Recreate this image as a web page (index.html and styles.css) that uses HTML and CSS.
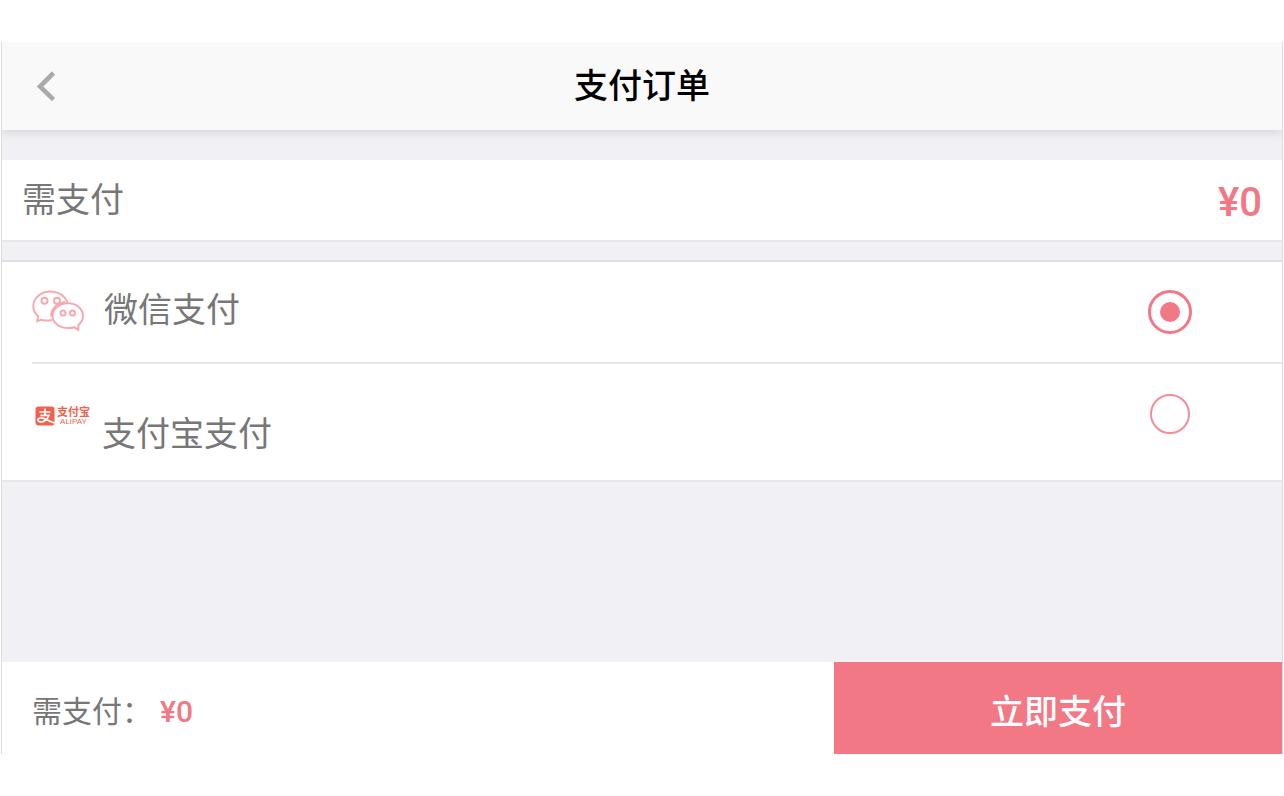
FILE: index.html
```html
<!DOCTYPE html>
<html lang="zh-CN">
<head>
<meta charset="utf-8">
<meta name="viewport" content="width=device-width, initial-scale=1">
<title>支付订单</title>
<link rel="stylesheet" href="styles.css">
</head>
<body>
<form class="page">
  <header class="topbar">
    <button class="back" type="button" aria-label="返回">
      <svg width="20" height="32" viewBox="0 0 20 32" fill="none" stroke="#aaa" stroke-width="4.6"><path d="M17.500 3 4 16.500l13.500 13.200"/></svg>
    </button>
    <h1 class="title">支付订单</h1>
  </header>
  <main class="content">
    <section class="amount">
      <span class="amount-label">需支付</span>
      <strong class="amount-value">¥0</strong>
    </section>
    <section class="methods">
      <label class="method wechat">
        <svg class="logo" width="56" height="44" viewBox="1.500 1.500 56 44" fill="none" stroke="#f7a8b0" stroke-width="2">
          <path d="M22 31.500c-4.500 1-8 .8-11.700-.3L6.800 32.700l.7-5.200C4.600 25 2.800 21.500 2.800 17.800 2.800 9.300 10.500 3 20 3c8.500 0 15.500 5 17 12"/>
          <path d="M37.500 14.800C29 14.800 22 20.300 22 27.200S29 39.600 37.500 39.600c2.500 0 4.600-.2 6.500-.8l3.800 2.600.2-5.200c3-2.200 4.500-5.400 4.500-9 0-6.900-6.500-12.400-15-12.400Z"/>
          <path d="M20.500 28c.2-7.500 5.500-13 14-14.500"/>
          <circle cx="14" cy="12.300" r="3"/><circle cx="26.500" cy="12.300" r="3"/>
          <circle cx="32.500" cy="24.500" r="2.500"/><circle cx="42" cy="24.500" r="2.500"/>
        </svg>
        <span class="name">微信支付</span>
        <input class="radio" type="radio" name="method" value="wechat" checked>
      </label>
      <label class="method alipay">
        <span class="logo alipay-logo">
          <svg width="20" height="20" viewBox="0 0 20 20"><rect width="19" height="19" x=".5" y=".5" rx="3" fill="#f0624c"/><g fill="none" stroke="#fff" stroke-width="1.700"><path d="M4.500 6h11M10 2.500V9M5.500 9.300h8.500c-.8 2.500-2.500 4.500-4.500 5.700-2 1.300-6 1.300-6.500-.8-.4-2.400 3.500-2.900 6-1.700 3 1.400 6 3.300 10.500 4.300"/></g></svg>
          <span class="brand"><span class="brand-cn">支付宝</span><span class="brand-en">ALIPAY</span></span>
        </span>
        <span class="name">支付宝支付</span>
        <input class="radio" type="radio" name="method" value="alipay">
      </label>
    </section>
  </main>
  <footer class="paybar">
    <p class="total">需支付：<strong class="total-value">¥0</strong></p>
    <button class="pay" type="submit">立即支付</button>
  </footer>
</form>
</body>
</html>
```
FILE: styles.css
```css
* { box-sizing: border-box; }
body {
  margin: 0;
  padding: 42px 1px;
  background: #fff;
  color: #777;
  font-family: "Liberation Sans", "Noto Sans CJK SC", sans-serif;
}
button { border: 0; padding: 0; font: inherit; cursor: pointer; }
svg { display: block; }
.page {
  display: flex;
  flex-direction: column;
  min-height: calc(100vh - 84px);
  border: solid #dcdcde;
  border-width: 0 1px;
}
.topbar {
  display: grid;
  grid-template-columns: 88px 1fr 88px;
  align-items: center;
  height: 88px;
  background: #f9f9f9;
  box-shadow: 0 2px 10px rgba(0, 0, 0, .13);
  clip-path: inset(0 0 -20px);
  z-index: 1;
}
.back { display: grid; place-items: center; height: 88px; background: none; }
.title { margin: 0; text-align: center; font-size: 34px; line-height: 48px; font-weight: 500; color: #000; }
.content { flex: 1; padding-top: 30px; background: #f0f0f5; }
.amount {
  display: flex;
  align-items: center;
  justify-content: space-between;
  height: 82px;
  padding: 0 20px;
  background: #fff;
  border-bottom: 2px solid #e7e7e9;
}
.amount-label { font-size: 34px; line-height: 48px; }
.amount-value { padding-top: 6px; font: 500 40px/48px Roboto, sans-serif; color: #f27885; }
.methods {
  margin-top: 18px;
  background: #fff;
  border: solid #e0e0e3;
  border-width: 2px 0;
  border-bottom-color: #e7e7e9;
}
.method {
  display: grid;
  grid-template-columns: 72px 1fr 44px;
  align-items: center;
  margin-left: 30px;
  padding-right: 90px;
}
.wechat { height: 102px; border-bottom: 2px solid #e5e5e6; }
.alipay { grid-template-columns: 70px 1fr 44px; height: 116px; padding-bottom: 16px; }
.name { font-size: 34px; line-height: 48px; }
.wechat .name { padding-bottom: 4px; }
.alipay .name { padding-top: 40px; }
.alipay-logo { display: flex; align-items: center; gap: 2px; padding: 4px 0 0 3px; }
.brand { display: flex; flex-direction: column; color: #f0624c; }
.brand-cn { font-size: 11px; line-height: 12px; font-weight: 700; }
.brand-en { font-size: 8px; line-height: 8px; text-align: center; }
.radio {
  appearance: none;
  display: grid;
  place-items: center;
  justify-self: center;
  width: 40px;
  height: 40px;
  margin: 0;
  border: 2px solid #f38e98;
  border-radius: 50%;
}
.radio:checked { width: 44px; height: 44px; border: 3px solid #f27885; }
.radio:checked::before { content: ""; width: 20px; height: 20px; border-radius: 50%; background: #f27885; }
.paybar { display: grid; grid-template-columns: 65% 35%; height: 92px; background: #fff; }
.total { display: flex; align-items: center; margin: 0; padding: 8px 30px 0; font-size: 30px; line-height: 48px; }
.total-value { padding-left: 8px; font: 500 30px/48px Roboto, sans-serif; color: #f27885; }
.pay { padding-top: 8px; background: #f27885; color: #fff; font-size: 34px; font-weight: 500; line-height: 48px; }
```
